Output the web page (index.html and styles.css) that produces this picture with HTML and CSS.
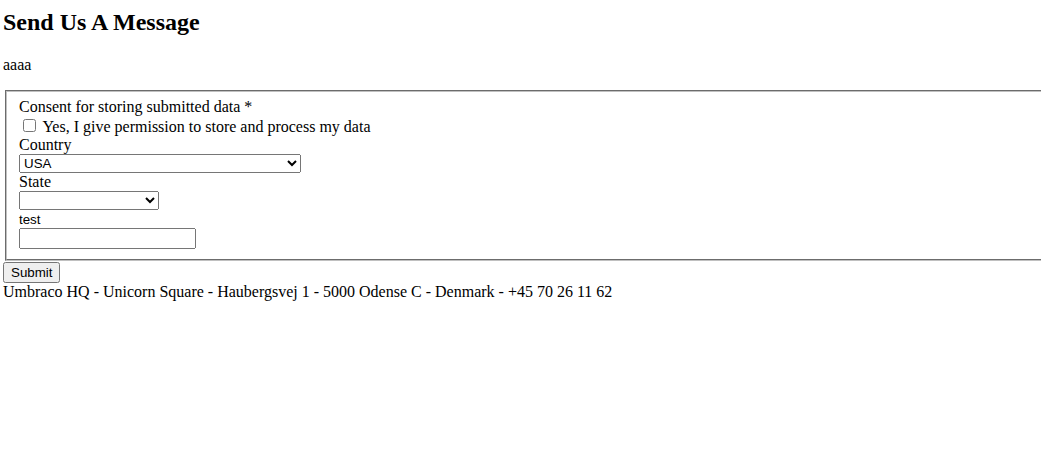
FILE: index.html
```html
<!DOCTYPE html>
<html>
<head>
<meta charset="utf-8">
<title>Send Us A Message</title>
<link rel="stylesheet" href="styles.css">
</head>
<body>
<h2 class="title">Send Us A Message</h2>
<p class="intro">aaaa</p>
<form class="form">
  <fieldset class="set">
    <div class="field">
      <label class="lbl">Consent for storing submitted data *</label>
      <div class="check-row"><input type="checkbox" id="consent" class="check"> <label for="consent">Yes, I give permission to store and process my data</label></div>
    </div>
    <div class="field">
      <label class="lbl" for="country">Country</label>
      <select id="country" class="sel sel-country"><option>USA</option></select>
    </div>
    <div class="field">
      <label class="lbl" for="state">State</label>
      <select id="state" class="sel sel-state"><option></option></select>
    </div>
    <div class="field">
      <div class="lbl-row"><label class="lbl-sans" for="test">test</label></div>
      <input type="text" id="test" class="txt">
    </div>
  </fieldset>
  <button type="button" class="btn">Submit</button>
</form>
<div class="footer">Umbraco HQ - Unicorn Square - Haubergsvej 1 - 5000 Odense C - Denmark - +45 70 26 11 62</div>
</body>
</html>
```
FILE: styles.css
```css
html { overflow: hidden; }
body {
  margin: 0 3px;
  font-family: "Liberation Serif", "Times New Roman", serif;
  font-size: 16px;
  color: #000;
  background: #fff;
}
.title {
  font-size: 24px;
  font-weight: bold;
  margin: 9px 0 20px;
}
.intro { margin: 0 0 16px; }
.form { margin: 0; }
.set {
  margin: 0 2px;
  padding: 5.6px 12px 10px;
  border: 2px groove #c0c0c0;
  width: 1100px;
}
.lbl { display: block; }
.lbl-sans {
  font-family: "Liberation Sans", Arial, sans-serif;
  font-size: 13.333px;
}
.check { margin: 3px 3px 3px 4px; vertical-align: baseline; }
.sel, .txt, .btn {
  font-family: "Liberation Sans", Arial, sans-serif;
  font-size: 13.333px;
}
.sel { display: block; }
.sel-country { width: 282px; }
.sel-state { width: 140px; }
.txt { display: block; width: 177px; box-sizing: border-box; height: 21px; }
.btn { margin: 1px 0 0; }
```
